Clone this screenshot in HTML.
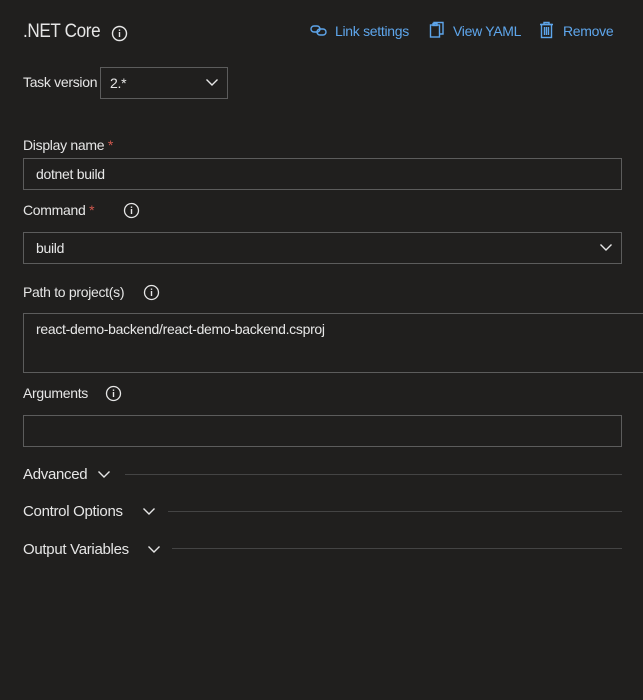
<!DOCTYPE html>
<html><head><style>
body{margin:0;width:643px;height:700px;background:#201f1e;font-family:"Liberation Sans",sans-serif;color:#e6e6e6;position:relative;overflow:hidden}
.a{position:absolute;white-space:nowrap}
.l{font-size:14px;letter-spacing:-0.3px}
.box{position:absolute;border:1px solid #5c5c5c;box-sizing:border-box}
.t{font-size:14px;letter-spacing:-0.3px;color:#e8e8e8}
.blue{color:#5ea6ec;font-size:14px;letter-spacing:-0.3px}
.req{color:#d0584e}
.line{position:absolute;height:1px;background:#444}
.h{font-size:15px;letter-spacing:-0.3px}
</style></head><body>
<div class="a" style="left:23px;top:21px;font-size:19px;letter-spacing:-0.4px;transform:scaleX(0.9);transform-origin:left top">.NET Core</div>
<svg class="a" style="left:111px;top:25px" width="17" height="17" viewBox="0 0 17 17"><circle cx="8.5" cy="8.5" r="7" fill="none" stroke="#e6e6e6" stroke-width="1.4"/><rect x="7.8" y="7" width="1.4" height="5" fill="#e6e6e6"/><rect x="7.8" y="4.5" width="1.4" height="1.4" fill="#e6e6e6"/></svg>

<svg class="a" style="left:310px;top:23px" width="18" height="16" viewBox="0 0 18 16"><g fill="none" stroke="#5ea6ec" stroke-width="1.4"><rect x="1" y="3" width="9" height="6" rx="3"/><rect x="7" y="6" width="9" height="6" rx="3"/></g></svg>
<div class="a blue" style="left:335px;top:23px">Link settings</div>
<svg class="a" style="left:429px;top:21px" width="16" height="18" viewBox="0 0 16 18"><g fill="none" stroke="#5ea6ec" stroke-width="1.4"><rect x="1.5" y="4" width="9" height="12"/><path d="M5 4V1.5h9V13h-3.5"/><rect x="4" y="2.5" width="4" height="2"/></g></svg>
<div class="a blue" style="left:453px;top:23px">View YAML</div>
<svg class="a" style="left:539px;top:21px" width="15" height="18" viewBox="0 0 15 18"><g fill="none" stroke="#5ea6ec" stroke-width="1.4"><path d="M1 3.5h13M5 3.5V1.5h5v2"/><rect x="2.5" y="3.5" width="10" height="13"/><path d="M5.5 6v8M7.5 6v8M9.5 6v8"/></g></svg>
<div class="a blue" style="left:563px;top:23px">Remove</div>

<div class="a l" style="left:23px;top:74px">Task version</div>
<div class="box" style="left:100px;top:67px;width:128px;height:32px"></div>
<div class="a t" style="left:110px;top:75px">2.*</div>
<svg class="a" style="left:205px;top:77px" width="14" height="10" viewBox="0 0 14 10"><path d="M1.5 2.5l5.5 5.5 5.5-5.5" fill="none" stroke="#e6e6e6" stroke-width="1.4"/></svg>

<div class="a l" style="left:23px;top:137px">Display name <span class="req">*</span></div>
<div class="box" style="left:23px;top:158px;width:599px;height:32px"></div>
<div class="a t" style="left:36px;top:166px">dotnet build</div>

<div class="a l" style="left:23px;top:202px">Command <span class="req">*</span></div>
<svg class="a" style="left:123px;top:202px" width="17" height="17" viewBox="0 0 17 17"><circle cx="8.5" cy="8.5" r="7" fill="none" stroke="#e6e6e6" stroke-width="1.3"/><rect x="7.8" y="7" width="1.4" height="5" fill="#e6e6e6"/><rect x="7.8" y="4.5" width="1.4" height="1.4" fill="#e6e6e6"/></svg>
<div class="box" style="left:23px;top:232px;width:599px;height:32px"></div>
<div class="a t" style="left:36px;top:240px">build</div>
<svg class="a" style="left:599px;top:242px" width="14" height="10" viewBox="0 0 14 10"><path d="M1.5 2.5l5.5 5.5 5.5-5.5" fill="none" stroke="#e6e6e6" stroke-width="1.4"/></svg>

<div class="a l" style="left:23px;top:284px">Path to project(s)</div>
<svg class="a" style="left:143px;top:284px" width="17" height="17" viewBox="0 0 17 17"><circle cx="8.5" cy="8.5" r="7" fill="none" stroke="#e6e6e6" stroke-width="1.3"/><rect x="7.8" y="7" width="1.4" height="5" fill="#e6e6e6"/><rect x="7.8" y="4.5" width="1.4" height="1.4" fill="#e6e6e6"/></svg>
<div class="box" style="left:23px;top:313px;width:630px;height:60px"></div>
<div class="a t" style="left:36px;top:321px">react-demo-backend/react-demo-backend.csproj</div>

<div class="a l" style="left:23px;top:385px">Arguments</div>
<svg class="a" style="left:105px;top:385px" width="17" height="17" viewBox="0 0 17 17"><circle cx="8.5" cy="8.5" r="7" fill="none" stroke="#e6e6e6" stroke-width="1.3"/><rect x="7.8" y="7" width="1.4" height="5" fill="#e6e6e6"/><rect x="7.8" y="4.5" width="1.4" height="1.4" fill="#e6e6e6"/></svg>
<div class="box" style="left:23px;top:415px;width:599px;height:32px"></div>

<div class="a h" style="left:23px;top:466px">Advanced</div>
<svg class="a" style="left:97px;top:469px" width="14" height="10" viewBox="0 0 14 10"><path d="M1.5 2.5l5.5 5.5 5.5-5.5" fill="none" stroke="#e6e6e6" stroke-width="1.4"/></svg>
<div class="line" style="left:125px;top:474px;width:497px"></div>

<div class="a h" style="left:23px;top:503px">Control Options</div>
<svg class="a" style="left:142px;top:506px" width="14" height="10" viewBox="0 0 14 10"><path d="M1.5 2.5l5.5 5.5 5.5-5.5" fill="none" stroke="#e6e6e6" stroke-width="1.4"/></svg>
<div class="line" style="left:168px;top:511px;width:454px"></div>

<div class="a h" style="left:23px;top:541px">Output Variables</div>
<svg class="a" style="left:147px;top:544px" width="14" height="10" viewBox="0 0 14 10"><path d="M1.5 2.5l5.5 5.5 5.5-5.5" fill="none" stroke="#e6e6e6" stroke-width="1.4"/></svg>
<div class="line" style="left:172px;top:548px;width:450px"></div>
</body></html>
